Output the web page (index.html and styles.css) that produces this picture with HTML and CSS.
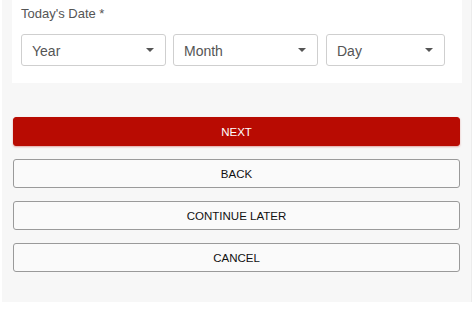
FILE: index.html
```html
<!DOCTYPE html>
<html>
  <head>
    <link rel="stylesheet" href="styles.css">
  </head>
  <body>
    <div class="panel">
      <!-- Date card -->
      <div class="card">
        <label class="field-label">Today's Date *</label>
        <div class="date-row">
          <div class="select select-wide"><span>Year</span><i class="caret"></i></div>
          <div class="select select-wide"><span>Month</span><i class="caret"></i></div>
          <div class="select select-day"><span>Day</span><i class="caret"></i></div>
        </div>
      </div>

      <!-- Actions -->
      <div class="actions">
        <button class="btn btn-primary">NEXT</button>
        <button class="btn">BACK</button>
        <button class="btn">CONTINUE LATER</button>
        <button class="btn">CANCEL</button>
      </div>
    </div>
  </body>
</html>
```

FILE: styles.css
```css
body {
  margin: 0;
  background: #ffffff;
  font-family: "Liberation Sans", Arial, sans-serif;
}

.panel {
  margin-left: 2px;
  width: 470px;
  height: 302px;
  background: #f7f7f7;
  border-right: 1px solid #ececec;
  box-sizing: border-box;
}

.card {
  margin-left: 10px;
  width: 450px;
  height: 83px;
  background: #ffffff;
  padding: 6px 0 0 9px;
  box-sizing: border-box;
}

.field-label {
  display: block;
  font-size: 13px;
  color: #555555;
  line-height: 15px;
}

.date-row {
  display: flex;
  gap: 7px;
  margin-top: 13px;
}

.select {
  display: flex;
  align-items: center;
  justify-content: space-between;
  height: 32px;
  padding: 2px 10px 0 10px;
  border: 1px solid #cfcfcf;
  border-radius: 3px;
  box-sizing: border-box;
  font-size: 14px;
  color: #555555;
}

.select-wide {
  width: 145px;
}

.select-day {
  width: 119px;
  margin-left: 1px;
}

.caret {
  width: 0;
  height: 0;
  border-left: 4px solid transparent;
  border-right: 4px solid transparent;
  border-top: 4px solid #555555;
  margin: 0 1px 2px 0;
}

.actions {
  display: flex;
  flex-direction: column;
  gap: 13px;
  margin: 34px 0 0 11px;
  width: 447px;
}

.btn {
  height: 29px;
  border: 1px solid #9a9a9a;
  border-radius: 3px;
  background: #fafafa;
  color: #111111;
  font-family: "Liberation Sans", Arial, sans-serif;
  font-size: 11.5px;
  padding: 0;
}

.btn-primary {
  background: #b80b02;
  border-color: #b80b02;
  color: #ffffff;
  box-shadow: 0 1px 2px rgba(184, 11, 2, 0.35);
}
```
